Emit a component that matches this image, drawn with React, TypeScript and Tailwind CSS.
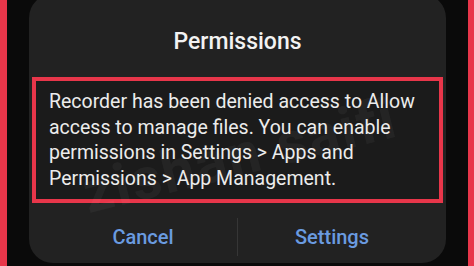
export default function App() {
  return (
    <div
      className="flex h-[266px] w-[474px] overflow-hidden bg-[#e8364a] pl-[7px] pr-[6px]"
      style={{ fontFamily: "Roboto, 'Liberation Sans', sans-serif" }}
    >
      <div className="flex flex-1 bg-[#0a0a0a] pl-[22px] pr-[22px]">
        <div className="relative -mt-[6px] mb-[3px] flex flex-1 flex-col overflow-hidden rounded-[24px] bg-[#222222]">
          {/* title */}
          <div className="flex h-[83px] items-center justify-center pt-[12px]">
            <h1 className="text-[23px] font-medium leading-none text-[#f2f2f2]">Permissions</h1>
          </div>

          {/* highlighted message */}
          <div className="mx-[3px] h-[126px] border-[4px] border-[#e8364a] bg-[#1b1b1b] pl-[13px] pr-[6px] pt-[8px]">
            <p className="text-[19.5px] leading-[25.7px] text-[#ececec]">
              Recorder has been denied access to Allow access to manage files. You can enable
              permissions in Settings &gt; Apps and Permissions &gt; App Management.
            </p>
          </div>

          {/* actions */}
          <div className="flex flex-1 items-center px-[20px] pt-[8px]">
            <button type="button" className="flex-1 text-[20px] font-medium text-[#6a9be0]">
              Cancel
            </button>
            <div className="h-[38px] w-px bg-[#363636]" />
            <button type="button" className="flex-1 text-[20px] font-medium text-[#6a9be0]">
              Settings
            </button>
          </div>

          {/* watermark */}
          <div className="pointer-events-none absolute left-[50px] top-[118px] -rotate-[14deg] text-[58px] font-bold tracking-[2px] text-white/[0.045]">
            zishan saifi
          </div>
        </div>
      </div>
    </div>
  );
}
